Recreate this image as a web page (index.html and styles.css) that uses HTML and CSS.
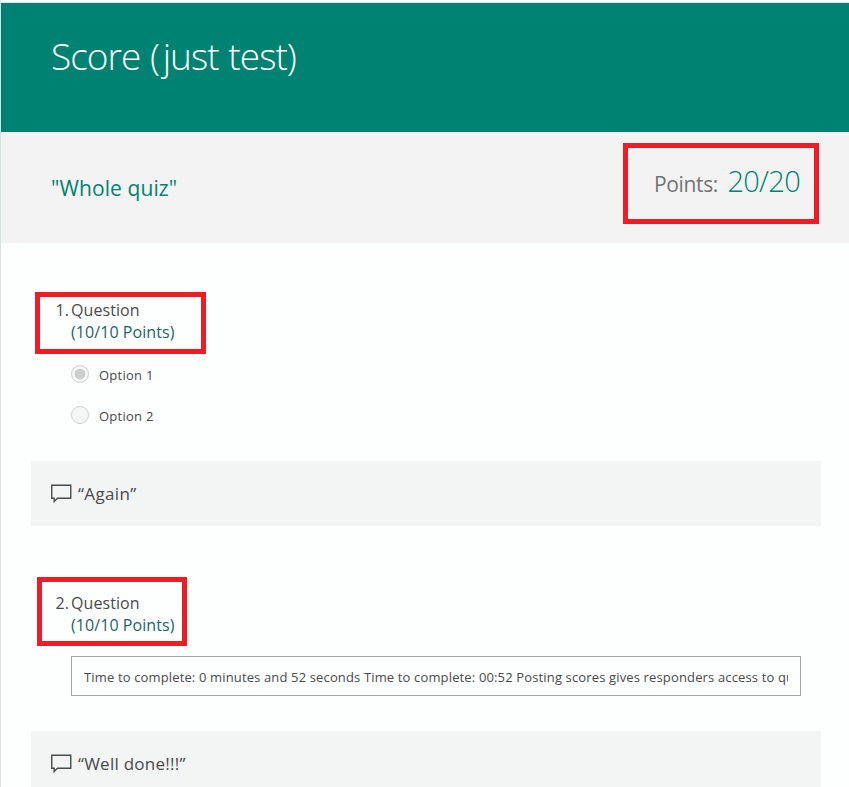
FILE: index.html
```html
<!DOCTYPE html>
<html lang="en">
<head>
<meta charset="utf-8">
<title>Score (just test)</title>
<link rel="stylesheet" href="styles.css">
</head>
<body>
<div class="page">
  <header class="header"><h1 class="title">Score <span class="paren">(</span>just test)</h1></header>
  <section class="summary">
    <span class="quiz">"Whole quiz"</span>
    <div class="total"><span class="total-label">Points:</span><span class="total-value">20/20</span><i class="mark mark-total"></i></div>
  </section>
  <main class="questions">
    <section class="question first">
      <div class="heading">
        <span class="number">1.</span>
        <div><div class="name">Question</div><div class="points">(10/10 Points)</div></div>
        <i class="mark mark-one"></i>
      </div>
      <div class="options">
        <div class="option"><span class="radio checked"></span><span class="option-text">Option 1</span></div>
        <div class="option"><span class="radio"></span><span class="option-text">Option 2</span></div>
      </div>
      <div class="comment">
        <svg class="bubble" width="21" height="19" viewBox="0 0 21 19"><path d="M.75 1.25h19v13H6.5l-3.3 3.3v-3.3H.75z"/></svg>
        <span class="again">“Again”</span>
      </div>
    </section>
    <section class="question second">
      <div class="heading">
        <span class="number">2.</span>
        <div><div class="name">Question</div><div class="points">(10/10 Points)</div></div>
        <i class="mark mark-two"></i>
      </div>
      <div class="answer"><div class="answer-text">Time to complete: 0 minutes and 52 seconds Time to complete: 00:52 Posting scores gives responders access to quiz</div></div>
      <div class="comment">
        <svg class="bubble" width="21" height="19" viewBox="0 0 21 19"><path d="M.75 1.25h19v13H6.5l-3.3 3.3v-3.3H.75z"/></svg>
        <span class="well">“Well done!!!”</span>
      </div>
    </section>
  </main>
</div>
</body>
</html>
```
FILE: styles.css
```css
* { box-sizing: border-box; }
body { margin: 0; background: #fdfefe; color: #4a4a4a; font-family: "Open Sans", "Noto Sans", sans-serif; overflow: hidden; }
.page { height: 787px; padding-top: 2px; border-left: 1px solid #d8e2e6; overflow: hidden; }
.header { height: 130px; padding: 24px 0 0 50px; border-top: 1px solid #d8e2e6; background: #008272; }
.title { margin: 0; color: #fff; font-size: 37px; font-weight: 300; line-height: 58px; letter-spacing: -.95px; word-spacing: 1px; white-space: nowrap; }
.paren { letter-spacing: 2.5px; }
.summary { display: flex; justify-content: space-between; height: 111px; padding: 0 49px 0 50px; background: #f3f3f3; }
.quiz { padding-top: 40px; color: #008272; font-size: 21px; line-height: 32px; letter-spacing: .1px; }
.total { position: relative; display: flex; align-items: baseline; width: 146px; height: 50px; padding-top: 24px; line-height: 50px; }
.total-label { width: 74px; color: #737373; font-size: 21px; letter-spacing: -.35px; }
.total-value { color: #008272; font-size: 29px; font-weight: 300; letter-spacing: -.7px; }
.mark { position: absolute; border: 5px solid #ee1c24; }
.mark-total { left: -31px; top: 11px; width: 196px; height: 81px; }
.mark-one { left: -36px; top: -7px; width: 171px; height: 62px; }
.mark-two { left: -34px; top: -15px; width: 150px; height: 69px; }
.questions { padding: 56px 28px 0 30px; }
.heading { position: relative; margin-left: 40px; display: flex; height: 44px; font-size: 16px; line-height: 22px; letter-spacing: .07px; }
.number { width: 20px; margin-left: -20px; padding-right: 2px; text-align: right; }
.points { color: #1f6464; }
.options { padding: 10px 0 0 40px; height: 118px; }
.option { display: flex; align-items: center; height: 41px; font-size: 13px; letter-spacing: .25px; }
.option-text { padding-top: 2px; }
.radio { width: 18px; height: 18px; margin-right: 10px; border: 1px solid #cfd1d1; border-radius: 50%; background: #f5f7f7; }
.checked { background: radial-gradient(circle, #cdcfcf 0 5px, #f5f7f7 5.7px); }
.comment { display: flex; align-items: center; height: 65px; padding-left: 20px; background: #f3f4f4; font-size: 17px; }
.again { letter-spacing: .35px; }
.well { letter-spacing: .25px; }
.bubble { margin-right: 6px; fill: none; stroke: #4b4b4b; stroke-width: 1.4; }
.second { padding-top: 66px; }
.answer { height: 40px; margin: 20px 20px 35px 40px; padding: 0 12px; border: 1px solid #a3a6a6; background: #fdfefe; font-size: 13px; line-height: 40px; letter-spacing: .145px; }
.answer-text { overflow: hidden; white-space: nowrap; }
```
